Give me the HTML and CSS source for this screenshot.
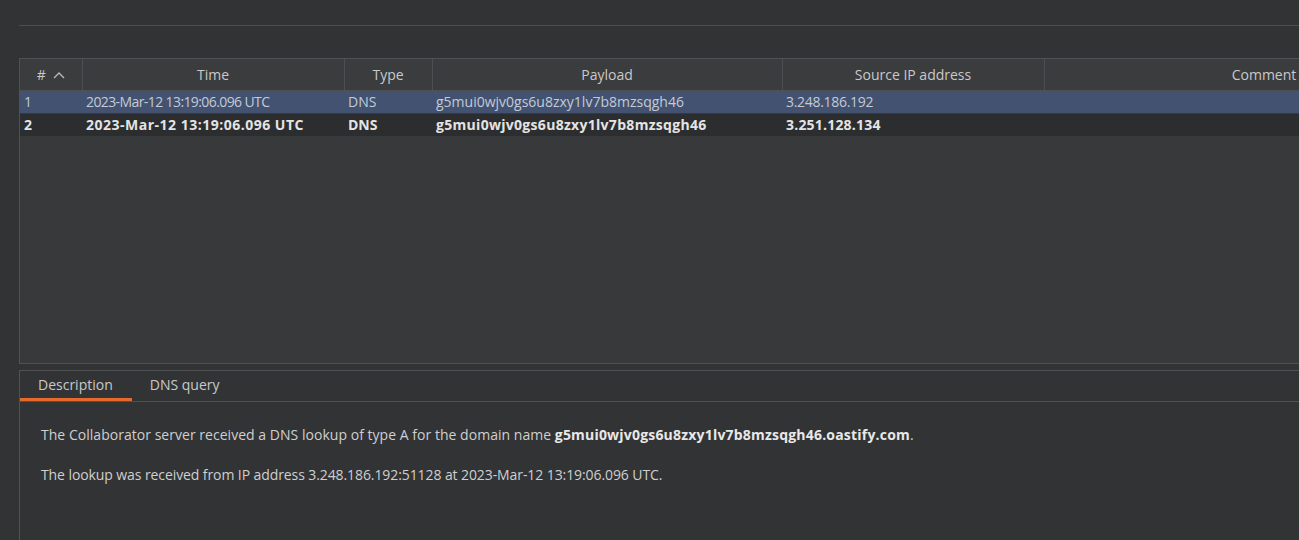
FILE: index.html
```html
<!DOCTYPE html>
<html>
<head>
<meta charset="utf-8">
<link rel="stylesheet" href="styles.css">
</head>
<body>
<div class="app">
  <div class="topbar"></div>
  <div class="main">
    <div class="table-wrap">
      <table class="grid">
        <colgroup>
          <col class="c-num"><col class="c-time"><col class="c-type"><col class="c-payload"><col class="c-ip"><col class="c-comment">
        </colgroup>
        <thead>
          <tr>
            <th><span class="hash">#</span><svg class="sort" width="12" height="8" viewBox="0 0 12 8"><path d="M1 7 L6 2 L11 7" fill="none" stroke="#b8b8b8" stroke-width="1.4"/></svg></th>
            <th>Time</th>
            <th>Type</th>
            <th>Payload</th>
            <th>Source IP address</th>
            <th>Comment</th>
          </tr>
        </thead>
        <tbody>
          <tr class="sel">
            <td>1</td><td class="num">2023-Mar-12 13:19:06.096 UTC</td><td>DNS</td><td class="pl">g5mui0wjv0gs6u8zxy1lv7b8mzsqgh46</td><td class="ip">3.248.186.192</td><td></td>
          </tr>
          <tr class="bold">
            <td>2</td><td class="num">2023-Mar-12 13:19:06.096 UTC</td><td>DNS</td><td class="pl">g5mui0wjv0gs6u8zxy1lv7b8mzsqgh46</td><td class="ip">3.251.128.134</td><td></td>
          </tr>
        </tbody>
      </table>
    </div>
    <div class="splitter"></div>
    <div class="detail">
      <div class="tabs">
        <div class="tab active">Description</div>
        <div class="tab">DNS query</div>
      </div>
      <div class="content">
        <p>The Collaborator server received a DNS lookup of type A for the domain name <b>g5mui0wjv0gs6u8zxy1lv7b8mzsqgh46.oastify.com</b>.</p>
        <p>The lookup was received from IP address 3.248.186.192:51128 at 2023-Mar-12 13:19:06.096 UTC.</p>
      </div>
    </div>
  </div>
</div>
</body>
</html>
```
FILE: styles.css
```css
html, body {
  margin: 0;
  padding: 0;
  background: #323335;
  height: 100%;
  overflow: hidden;
}
body {
  font-family: "Open Sans", "Noto Sans", sans-serif;
  font-size: 14px;
  color: #cfcfcf;
}
.app {
  width: 1299px;
  height: 540px;
  overflow: hidden;
  display: flex;
  flex-direction: column;
}
.topbar {
  height: 25px;
  margin-left: 19px;
  border-bottom: 1px solid #4c4d50;
  flex: none;
}
.main {
  flex: 1;
  display: flex;
  flex-direction: column;
  padding-top: 32px;
  padding-left: 19px;
  min-height: 0;
}
.table-wrap {
  height: 304px;
  border: 1px solid #505154;
  border-right: none;
  background: #38393b;
  overflow: hidden;
  flex: none;
}
.grid {
  table-layout: fixed;
  border-collapse: collapse;
  width: 1464px;
}
.c-num { width: 62px; }
.c-time { width: 262px; }
.c-type { width: 88px; }
.c-payload { width: 350px; }
.c-ip { width: 262px; }
.c-comment { width: 440px; }
.grid th {
  height: 31px;
  padding: 0;
  font-weight: normal;
  color: #c9c9c9;
  background: #3b3c3e;
  border-right: 1px solid #4d4e51;
  border-bottom: 1px solid #4d4e51;
  text-align: center;
  vertical-align: middle;
  white-space: nowrap;
}
.hash { margin-right: 7px; }
.sort { vertical-align: 1px; }
.grid td {
  height: 22px;
  padding: 0 0 0 4px;
  white-space: nowrap;
  overflow: hidden;
  vertical-align: middle;
  line-height: 18px;
}
.num { letter-spacing: -0.6px; }
.ip { letter-spacing: -0.3px; }
.grid tr.sel td {
  background: #425270;
  color: #c4cad6;
  border-bottom: 1px solid #38393b;
}
.grid tr.bold td {
  background: #2c2d2f;
  color: #e4e4e4;
  font-weight: bold;
}
.grid tr.bold td.num { letter-spacing: 0.5px; }
.grid tr.bold td.pl { letter-spacing: 0.3px; }
.grid tr.bold td.ip { letter-spacing: 0.2px; }
.splitter {
  height: 6px;
  border-bottom: 1px solid #505154;
  flex: none;
}
.detail {
  flex: 1;
  border-left: 1px solid #505154;
  display: flex;
  flex-direction: column;
}
.tabs {
  display: flex;
  height: 30px;
  border-bottom: 1px solid #505154;
  flex: none;
}
.tab {
  padding: 0 19px 0 18px;
  line-height: 28px;
  color: #c9c9c9;
  border-bottom: 3px solid transparent;
  box-sizing: border-box;
  height: 30px;
}
.tab.active {
  border-bottom-color: #e8692c;
}
.content {
  padding: 23px 0 0 21px;
  flex: 1;
}
.content p {
  margin: 0 0 20px;
  line-height: 20px;
  color: #cfcfcf;
  letter-spacing: 0.03px;
}
.content p + p {
  letter-spacing: -0.09px;
}
.content b {
  color: #e8e8e8;
  letter-spacing: 0.2px;
}
```
